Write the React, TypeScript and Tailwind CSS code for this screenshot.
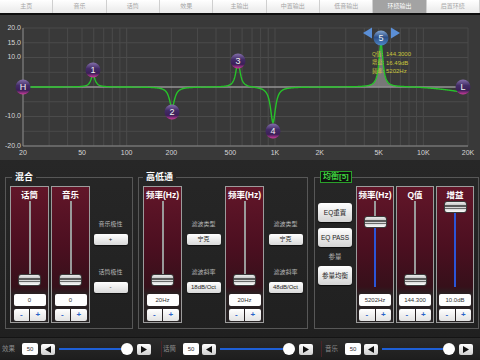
import clsx from "clsx";

const tabs = ["主页", "音乐", "话筒", "效果", "主输出", "中置输出", "低音输出", "环绕输出", "后置环绕"];

// chart geometry (page coordinates, svg viewBox starts at y=15)
const X0 = 23;
const X1 = 468;
const Y0 = 87;
const K = 2.95;
const fx = (f: number) => X0 + (Math.log10(f / 20) / 3) * (X1 - X0);
const yOf = (db: number) => Y0 - db * K;

const bands = [
  { x: 93, g: 4.1, w: 2.6 },
  { x: 172, g: -7, w: 3.2 },
  { x: 238, g: 8.8, w: 2.6 },
  { x: 273, g: -12.2, w: 3 },
  { x: 381, g: 14.9, w: 2.4 },
];

const bandDb = (b: { x: number; g: number; w: number }, x: number) =>
  b.g / (1 + ((x - b.x) / b.w) ** 2);

const dbAt = (x: number) =>
  bands.reduce((s, b) => s + bandDb(b, x), 0) +
  (x > 400 ? -1.8 * ((x - 400) / 63) ** 2 : 0);

const markers = [
  { x: 23, y: 87, t: "H" },
  { x: 93, y: 70, t: "1" },
  { x: 172, y: 112, t: "2" },
  { x: 238, y: 61, t: "3" },
  { x: 273, y: 131, t: "4" },
  { x: 463, y: 87, t: "L" },
];

const xLabels: [string, number][] = [
  ["20", 20], ["50", 50], ["100", 100], ["200", 200], ["500", 500],
  ["1K", 1000], ["2K", 2000], ["5K", 5000], ["10K", 10000], ["20K", 20000],
];

const yLabels: [string, number][] = [
  ["20.0", 20], ["15.0", 15], ["10.0", 10], ["0", 0], ["-10.0", -10], ["-20.0", -20],
];

function EqChart() {
  const grid: number[] = [];
  for (const d of [10, 100, 1000, 10000]) {
    for (let i = 1; i <= 9; i++) {
      const f = d * i;
      if (f >= 20 && f <= 20000) grid.push(f);
    }
  }

  let curve = "";
  for (let x = X0; x <= 463; x += 0.5) {
    curve += (x === X0 ? "M" : "L") + x + " " + yOf(dbAt(x)).toFixed(2) + " ";
  }

  let fill = "M366 87 ";
  for (let x = 366; x <= 396; x += 0.5) {
    fill += "L" + x + " " + yOf(bandDb(bands[4], x)).toFixed(2) + " ";
  }
  fill += "L396 87 Z";

  return (
    <svg width={480} height={145} viewBox="0 15 480 145" className="block bg-[#393939]">
      <defs>
        <linearGradient id="purple" x1="0" y1="0" x2="0" y2="1">
          <stop offset="0%" stopColor="#8570ad" />
          <stop offset="40%" stopColor="#432c66" />
          <stop offset="72%" stopColor="#3b1f58" />
          <stop offset="100%" stopColor="#d03c9e" />
        </linearGradient>
        <linearGradient id="blue" x1="0" y1="0" x2="0" y2="1">
          <stop offset="0%" stopColor="#86a9d6" />
          <stop offset="45%" stopColor="#2d4f86" />
          <stop offset="100%" stopColor="#4d86c8" />
        </linearGradient>
      </defs>

      {[20, 15, 10, 5, 0, -5, -10, -15, -20].map((db) => (
        <line key={db} x1={X0} x2={X1} y1={yOf(db)} y2={yOf(db)} stroke="#4b4b4b" strokeWidth={1} />
      ))}
      {grid.map((f) => (
        <line key={f} x1={fx(f)} x2={fx(f)} y1={28} y2={146} stroke="#4b4b4b" strokeWidth={1} />
      ))}
      <line x1={X0} x2={X0} y1={28} y2={146} stroke="#8a8a8a" />
      <line x1={X0} x2={X1} y1={146} y2={146} stroke="#8a8a8a" />
      <line x1={X0} x2={X1} y1={Y0} y2={Y0} stroke="#b9b9b9" />

      {yLabels.map(([t, db]) => (
        <text key={t} x={21} y={yOf(db)} fontSize={7} fill="#d6d6d6" textAnchor="end" dominantBaseline="middle">
          {t}
        </text>
      ))}
      {xLabels.map(([t, f]) => (
        <text key={t} x={fx(f)} y={153} fontSize={7} fill="#d6d6d6" textAnchor="middle" dominantBaseline="middle">
          {t}
        </text>
      ))}

      <path d={fill} fill="#8c8c8c" opacity={0.75} />
      <path d={curve} fill="none" stroke="#27c22a" strokeWidth={1.4} />

      {markers.map((m) => (
        <g key={m.t}>
          <circle cx={m.x} cy={m.y} r={7.5} fill="url(#purple)" />
          <text x={m.x} y={m.y + 0.5} fontSize={9} fill="#f2f2f2" textAnchor="middle" dominantBaseline="middle">
            {m.t}
          </text>
        </g>
      ))}

      <polygon points="363,33 372,27.5 372,38.5" fill="#5b8fd6" />
      <polygon points="400,33 391,27.5 391,38.5" fill="#5b8fd6" />
      <circle cx={381} cy={38} r={7.5} fill="url(#blue)" />
      <text x={381} y={38.5} fontSize={9} fill="#f2f2f2" textAnchor="middle" dominantBaseline="middle">
        5
      </text>

      {[
        ["Q值:", "144.3000", 54.5],
        ["增益:", "16.49dB", 63],
        ["频率:", "5202Hz", 71.5],
      ].map(([a, b, y]) => (
        <g key={a as string} fill="#c9c53c">
          <text x={372} y={y as number} fontSize={5.2} dominantBaseline="middle">{a}</text>
          <text x={386} y={y as number} fontSize={6} dominantBaseline="middle">{b}</text>
        </g>
      ))}
    </svg>
  );
}

function Handle() {
  return (
    <div className="h-[12px] w-[23px] shrink-0 rounded-[3px] border border-[#3a3a3a] bg-[linear-gradient(to_bottom,#ececec_0%,#c4c4c4_34%,#5a5a5a_35%,#5a5a5a_47%,#d6d6d6_48%,#d6d6d6_60%,#6a6a6a_61%,#6a6a6a_72%,#dedede_73%,#fbfbfb_100%)]" />
  );
}

function Strip({
  title,
  value,
  topClass,
  bottomClass,
  blue,
  width = "w-[39px]",
}: {
  title: string;
  value: string;
  topClass: string;
  bottomClass: string;
  blue?: boolean;
  width?: string;
}) {
  return (
    <div
      className={clsx(
        "flex h-[137px] shrink-0 flex-col items-center border border-[#9c9c9c] bg-[linear-gradient(to_bottom,#621629_0%,#4b0f20_45%,#36101a_74%,#2a2022_79%,#262223_100%)]",
        width
      )}
    >
      <div className="mt-[2px] h-[12px] whitespace-nowrap text-[8.5px] font-bold leading-[12px] text-white">
        {title}
      </div>
      <div className="flex h-[86px] flex-col items-center">
        <div className={clsx("w-[2px] bg-[#9a9a9a]", topClass)} />
        <Handle />
        <div className={clsx("w-[2px]", bottomClass, blue ? "bg-[#2b55d8]" : "bg-transparent")} />
      </div>
      <div className="mt-[7px] flex h-[12px] w-[32px] items-center justify-center rounded-[2px] bg-white text-[6px] text-[#333]">
        {value}
      </div>
      <div className="mt-[3px] flex h-[12px] w-[32px] gap-[1px]">
        <div className="flex flex-1 items-center justify-center rounded-l-[2px] bg-[linear-gradient(to_bottom,#ffffff,#e2e2e2)] text-[8px] font-bold leading-none text-[#2a63c8]">
          -
        </div>
        <div className="flex flex-1 items-center justify-center rounded-r-[2px] bg-[linear-gradient(to_bottom,#ffffff,#e2e2e2)] text-[8px] font-bold leading-none text-[#2a63c8]">
          +
        </div>
      </div>
    </div>
  );
}

function SmallButton({ children }: { children: React.ReactNode }) {
  return (
    <div className="flex h-[11px] w-[34px] items-center justify-center rounded-[2px] bg-[linear-gradient(to_bottom,#ffffff,#d9d9d9)] text-[6px] text-[#222] shadow-[0_1px_1px_rgba(0,0,0,0.6)]">
      {children}
    </div>
  );
}

function OptionColumn({ items }: { items: [string, string][] }) {
  return (
    <div className="flex w-[35px] shrink-0 flex-col items-center pt-[33px]">
      {items.map(([label, btn], i) => (
        <div key={i} className={clsx("flex flex-col items-center", i > 0 && "mt-[22px]")}>
          <div className="h-[10px] whitespace-nowrap text-[6px] leading-[10px] text-[#b4b4b4]">{label}</div>
          <div className="mt-[5px]">
            <SmallButton>{btn}</SmallButton>
          </div>
        </div>
      ))}
    </div>
  );
}

function BigButton({ children }: { children: React.ReactNode }) {
  return (
    <div className="flex h-[19px] w-[34px] items-center justify-center rounded-[3px] bg-[linear-gradient(to_bottom,#ffffff,#d4d4d4)] text-[6.5px] text-[#222] shadow-[0_1px_1px_rgba(0,0,0,0.7)]">
      {children}
    </div>
  );
}

function ArrowBtn({ dir, className }: { dir: "left" | "right"; className?: string }) {
  return (
    <div
      className={clsx(
        "flex h-[11px] w-[14px] shrink-0 items-center justify-center rounded-[2px] bg-[linear-gradient(to_bottom,#ffffff,#cfcfcf)]",
        className
      )}
    >
      <svg width={6} height={7} viewBox="0 0 6 7">
        {dir === "left" ? (
          <polygon points="0,3.5 6,0 6,7" fill="#111" />
        ) : (
          <polygon points="6,3.5 0,0 0,7" fill="#111" />
        )}
      </svg>
    </div>
  );
}

function BarSeg({ label, className }: { label: string; className: string }) {
  return (
    <div className={clsx("flex h-full items-center", className)}>
      <span className="w-[14px] whitespace-nowrap text-[6.5px] text-[#8c8c8c]">{label}</span>
      <div className="ml-[6px] flex h-[12px] w-[16px] shrink-0 items-center justify-center rounded-[2px] bg-white text-[6px] text-[#333]">
        50
      </div>
      <ArrowBtn dir="left" className="ml-[3px]" />
      <div className="ml-[4px] flex flex-1 items-center">
        <div className="h-[2px] flex-1 bg-[#1e5fd6]" />
        <div className="h-[12px] w-[12px] shrink-0 rounded-full bg-white" />
      </div>
      <ArrowBtn dir="right" className="ml-[4px]" />
    </div>
  );
}

export default function App() {
  return (
    <div className="flex h-[360px] w-[480px] flex-col overflow-hidden bg-[#222] font-['Liberation_Sans','Noto_Sans_CJK_SC',sans-serif]">
      {/* tab bar */}
      <div className="grid h-[13px] grid-cols-9 bg-[linear-gradient(to_bottom,#ffffff,#e9e9e9)]">
        {tabs.map((t, i) => (
          <div
            key={t}
            className={clsx(
              "flex items-center justify-center border-r border-[#cfcfcf] text-[6px]",
              i === 7 ? "bg-[#a3a3a3] text-white" : "text-[#a6a6a6]"
            )}
          >
            {t}
          </div>
        ))}
      </div>
      <div className="h-[2px] bg-[#0e0e0e]" />

      <EqChart />

      {/* control panels */}
      <div className="flex h-[177px] items-start gap-[5px] bg-[linear-gradient(to_bottom,#272727,#202020)] pl-[5px] pt-[11px]">
        <fieldset className="w-[128px] border border-[#575757] pb-[5px] pl-[4px] pr-[4px]">
          <legend className="ml-[2px] px-[3px] text-[9px] font-bold leading-[12px] text-white">混合</legend>
          <div className="mt-[3px] flex">
            <Strip title="话筒" value="0" topClass="h-[73px]" bottomClass="h-[1px]" />
            <div className="w-[2px]" />
            <Strip title="音乐" value="0" topClass="h-[73px]" bottomClass="h-[1px]" />
            <div className="w-[3px]" />
            <OptionColumn items={[["音乐极性", "+"], ["话筒极性", "-"]]} />
          </div>
        </fieldset>

        <fieldset className="w-[169px] border border-[#575757] pb-[5px] pl-[4px] pr-[4px]">
          <legend className="ml-[0px] px-[3px] text-[9px] font-bold leading-[12px] text-white">高低通</legend>
          <div className="mt-[3px] flex gap-[4px]">
            <Strip title="频率(Hz)" value="20Hz" topClass="h-[73px]" bottomClass="h-[1px]" />
            <OptionColumn items={[["滤波类型", "宁克"], ["滤波斜率", "18dB/Oct"]]} />
            <Strip title="频率(Hz)" value="20Hz" topClass="h-[73px]" bottomClass="h-[1px]" />
            <OptionColumn items={[["滤波类型", "宁克"], ["滤波斜率", "48dB/Oct"]]} />
          </div>
        </fieldset>

        <fieldset className="ml-[1px] w-[165px] border border-[#575757] pb-[5px] pl-[3px] pr-[4px]">
          <legend className="ml-[2px] border border-[#2aa02a] bg-[#111] px-[2px] text-[8px] font-bold leading-[10px] text-[#3fd43f]">
            均衡[5]
          </legend>
          <div className="mt-[3px] flex">
            <div className="flex w-[34px] shrink-0 flex-col items-center pt-[17px]">
              <BigButton>EQ重置</BigButton>
              <div className="mt-[6px]">
                <BigButton>EQ PASS</BigButton>
              </div>
              <div className="mt-[5px] h-[10px] text-[6.5px] leading-[10px] text-[#b4b4b4]">参量</div>
              <div className="mt-[4px]">
                <BigButton>参量均衡</BigButton>
              </div>
            </div>
            <div className="ml-[4px] flex gap-[2px]">
              <Strip title="频率(Hz)" value="5202Hz" topClass="h-[15px]" bottomClass="h-[59px]" blue width="w-[38px]" />
              <Strip title="Q值" value="144.300" topClass="h-[73px]" bottomClass="h-[1px]" width="w-[38px]" />
              <Strip title="增益" value="10.0dB" topClass="h-[0px]" bottomClass="h-[74px]" blue width="w-[38px]" />
            </div>
          </div>
        </fieldset>
      </div>

      {/* bottom level bar */}
      <div className="flex h-[23px] items-center border-t border-[#141414] bg-[linear-gradient(to_bottom,#2b2b2b,#1d1d1d)]">
        <BarSeg label="效果" className="w-[161px] pl-[2px] pr-[10px]" />
        <div className="h-[16px] w-[1px] bg-[#4a2327]" />
        <BarSeg label="话筒" className="w-[159px] pl-[1px] pr-[8px]" />
        <div className="h-[16px] w-[1px] bg-[#4a2327]" />
        <BarSeg label="音乐" className="flex-1 pl-[3px] pr-[7px]" />
      </div>
    </div>
  );
}
